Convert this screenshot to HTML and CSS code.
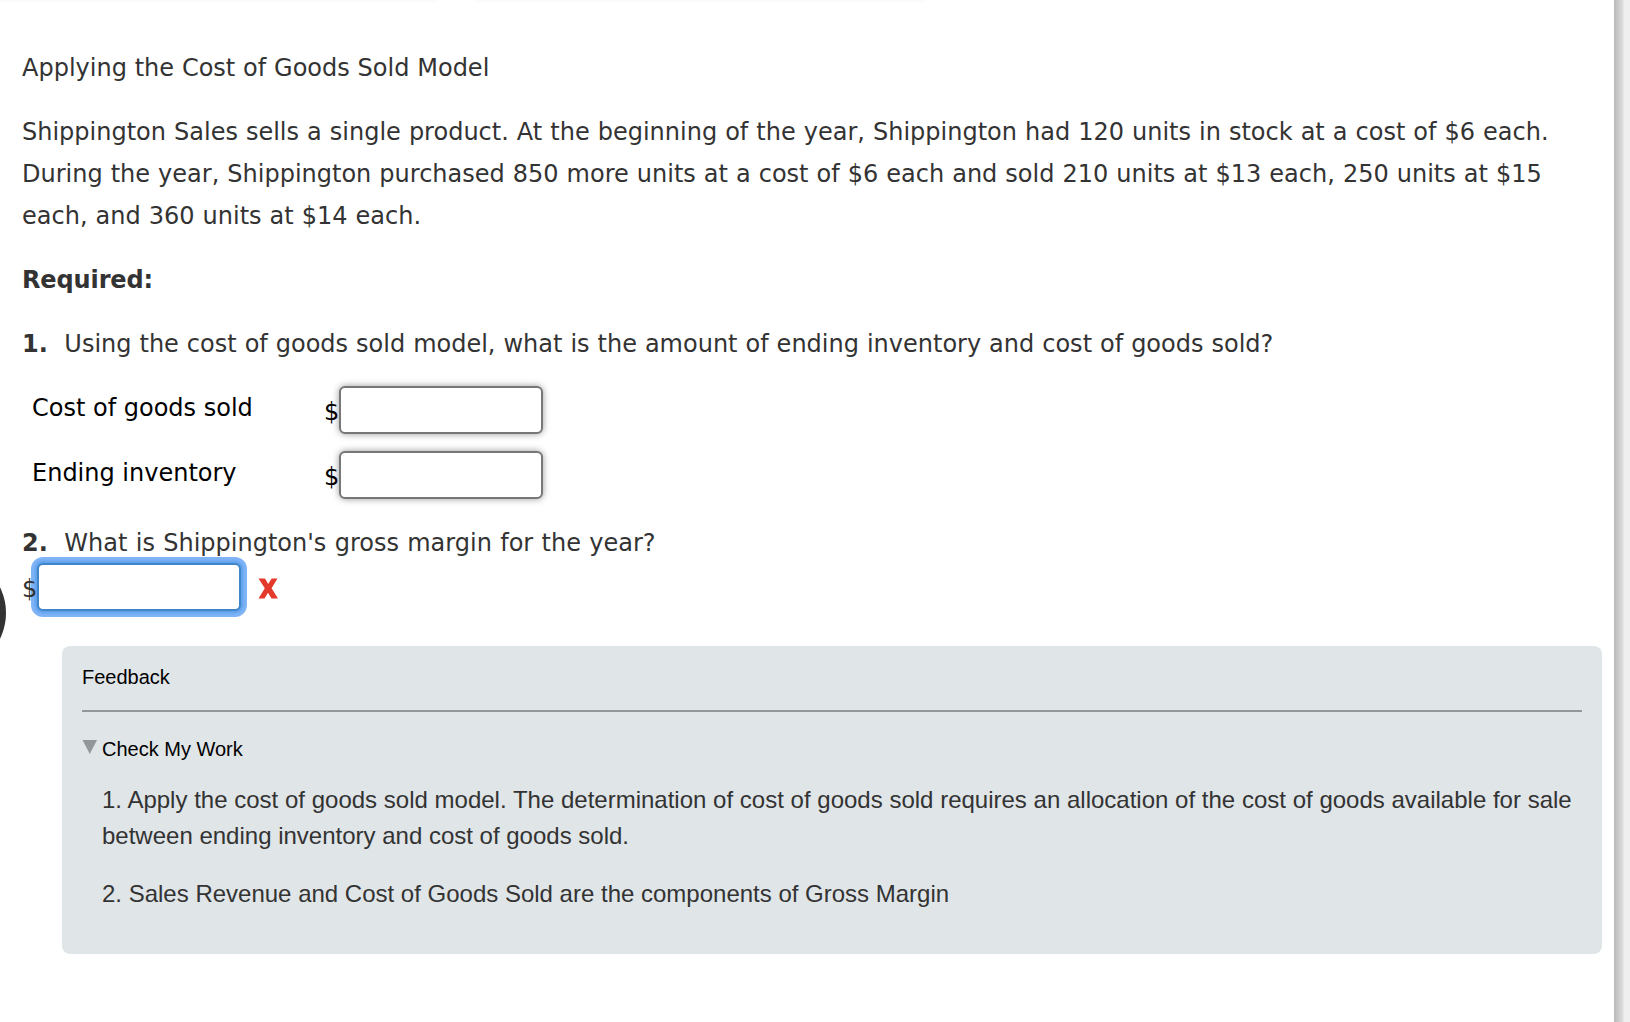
FILE: index.html
```html
<!DOCTYPE html>
<html lang="en"><head><meta charset="utf-8"><title>Applying the Cost of Goods Sold Model</title><link rel="stylesheet" href="styles.css"></head>
<body>
<div class="page">
<main class="content">
<p class="para title">Applying the Cost of Goods Sold Model</p>
<p class="para story">Shippington Sales sells a single product. At the beginning of the year, Shippington had 120 units in stock at a cost of $6 each.<br>During the year, Shippington purchased 850 more units at a cost of $6 each and sold 210 units at $13 each, 250 units at $15<br>each, and 360 units at $14 each.</p>
<p class="para required"><b>Required:</b></p>
<p class="para question"><b>1.</b><span>Using the cost of goods sold model, what is the amount of ending inventory and cost of goods sold?</span></p>
<div class="field"><label for="cogs">Cost of goods sold</label><span class="dollar">$</span><input id="cogs" class="box" type="text"></div>
<div class="field"><label for="inv">Ending inventory</label><span class="dollar">$</span><input id="inv" class="box" type="text"></div>
<p class="para question second"><b>2.</b><span>What is Shippington's gross margin for the year?</span></p>
<div class="answer"><span class="dollar">$</span><input class="box active" type="text" aria-label="Gross margin"><svg class="wrong" viewBox="0 0 20 22"><path d="M.5 .5H7L10.200 6L13.600 .5H19.500L13.600 10.300L20 20.500H13.500L10 14.800L6.500 20.500H.5L6.800 10.300Z"/></svg></div>
<section class="feedback">
<h2>Feedback</h2>
<div class="check"><svg class="arrow" viewBox="0 0 15 14"><path d="M.5 0H15L7.800 14Z"/></svg><span>Check My Work</span></div>
<p class="hint"><span class="wide">1. Apply the cost of goods sold model. The determination of cost of goods sold requires an allocation of the cost of goods available for sale</span><br>between ending inventory and cost of goods sold.</p>
<p class="hint">2. Sales Revenue and Cost of Goods Sold are the components of Gross Margin</p>
</section>
</main>
<div class="edge"></div>
<div class="knob"></div>
</div>
</body></html>
```
FILE: styles.css
```css
*{box-sizing:border-box}
body{margin:0;background:#fff;color:#333;font-family:Verdana,"DejaVu Sans",sans-serif;font-size:24px;line-height:42px}
.page{position:relative;display:flex;width:1630px;height:1022px;overflow:hidden}
.content{width:1614px;padding:47px 12px 0 22px;background:linear-gradient(#fafafa,#fff) 0 0/437px 3px no-repeat,linear-gradient(#fafafa,#fff) 475px 0/450px 3px no-repeat}
.para{margin:0 0 22px;white-space:nowrap}
.title{word-spacing:.2px}
.story{word-spacing:.4px}
.required{letter-spacing:-.12px}
.question{display:flex;gap:17px;word-spacing:.35px}
.question span{margin-left:-.5px}
.field{display:flex;height:65px;padding-left:10px;color:#000}
.field label{width:292px}
.dollar{position:relative;top:4px}
.box{width:204px;height:48px;margin-top:-1px;border:2px solid #777;border-radius:6px;background:#fff;box-shadow:0 0 7px #999;outline:none}
.second{margin:5px 0 0;word-spacing:.7px}
.answer{display:flex;height:82px}
.active{border-color:#4186c8;box-shadow:0 0 3px 2px #5b9fe9,0 0 0 6px #80b4f6}
.wrong{width:20px;height:22px;margin:14px 0 0 17px}
.wrong path{fill:#e43a2c}
.feedback{width:1540px;height:308px;margin-left:40px;padding:0 20px;border-radius:8px;background:#e0e5e8;font-family:"Liberation Sans",Arial,sans-serif}
.feedback h2{height:66px;margin:0 0 16px;padding-top:10px;border-bottom:2px solid #92989b;color:#000;font-size:20px;font-weight:400}
.check{display:flex;gap:5px;color:#000;font-size:20px}
.arrow{width:15px;height:14px;margin-top:12px;fill:#929799}
.hint{margin:12px 0 22px 20px;line-height:36px;white-space:nowrap}
.wide{word-spacing:.05px}
.edge{flex:1;background:linear-gradient(90deg,#b9b9b9,#dedede 9px,#efefef 10px)}
.knob{position:absolute;left:-110px;top:555px;width:116px;height:116px;border-radius:50%;background:#333}
```
